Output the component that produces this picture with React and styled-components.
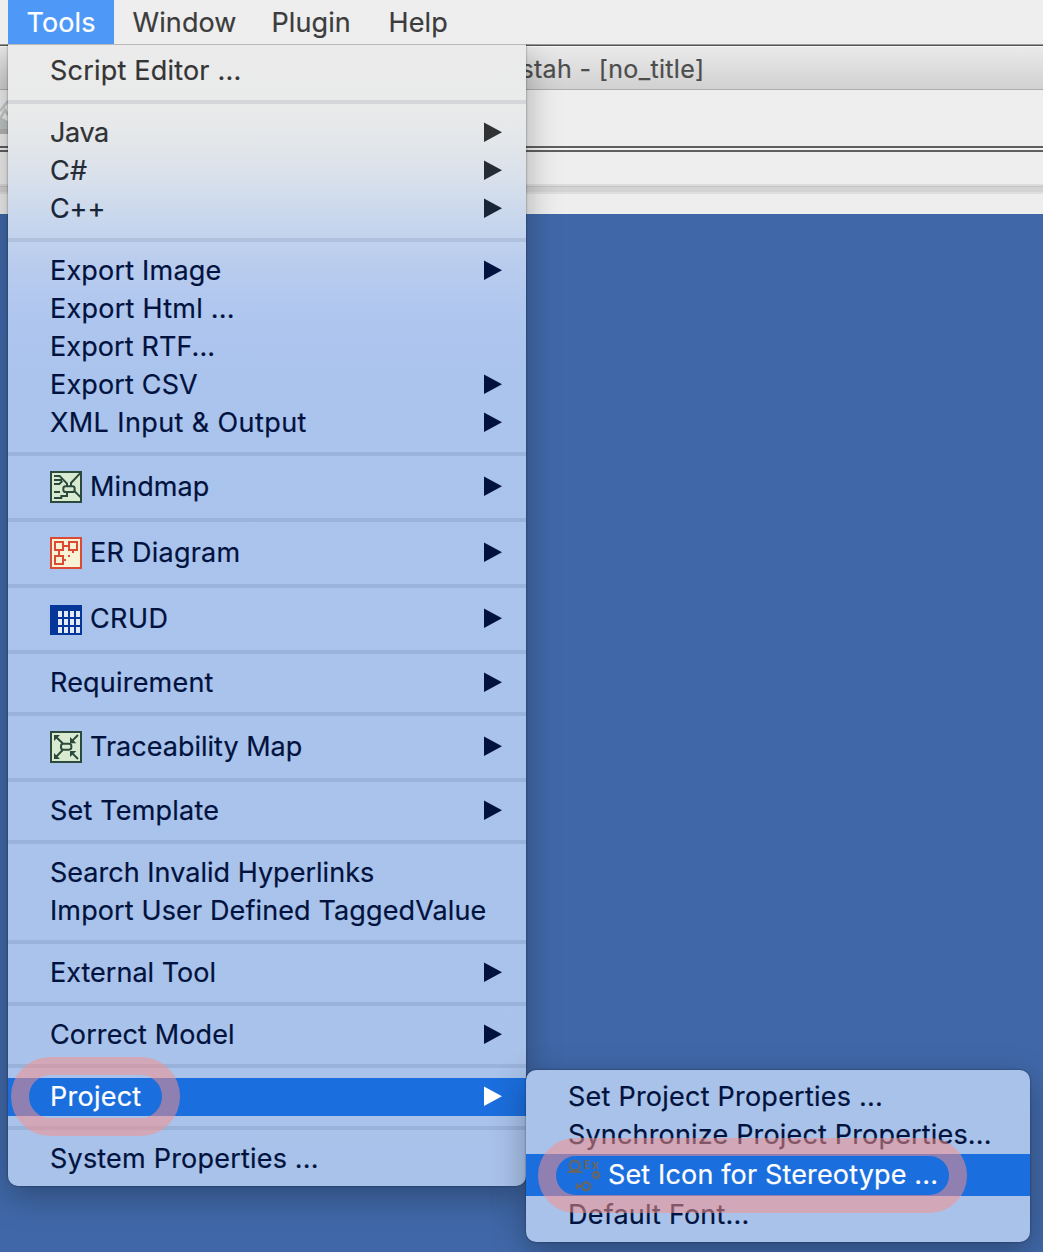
import { Fragment } from 'react'
import styled, { createGlobalStyle } from 'styled-components'

const barItems = [
	{ label: 'Tools', active: true, width: 106 },
	{ label: 'Window', width: 139 },
	{ label: 'Plugin', width: 117 },
	{ label: 'Help', width: 96 },
]

const toolsMenu = [
	[{ label: 'Script Editor ...', color: '#353535' }],
	[
		{ label: 'Java', arrow: true, color: '#303234', track: -0.4 },
		{ label: 'C#', arrow: true, color: '#262c36' },
		{ label: 'C++', arrow: true, color: '#182438', track: -0.1 },
	],
	[
		{ label: 'Export Image', arrow: true },
		{ label: 'Export Html ...', track: 0.25 },
		{ label: 'Export RTF...', track: 0.1 },
		{ label: 'Export CSV', arrow: true, track: 0.15 },
		{ label: 'XML Input & Output', arrow: true, track: 0.4 },
	],
	[{ label: 'Mindmap', icon: 'mindmap', arrow: true, track: 0.1 }],
	[{ label: 'ER Diagram', icon: 'er', arrow: true, track: 0.25 }],
	[{ label: 'CRUD', icon: 'crud', arrow: true, track: 0.4 }],
	[{ label: 'Requirement', arrow: true }],
	[{ label: 'Traceability Map', icon: 'trace', arrow: true, track: 0.01 }],
	[{ label: 'Set Template', arrow: true }],
	[
		{ label: 'Search Invalid Hyperlinks', track: 0.02 },
		{ label: 'Import User Defined TaggedValue', track: 0.12 },
	],
	[{ label: 'External Tool', arrow: true, track: 0.01 }],
	[{ label: 'Correct Model', arrow: true, track: 0.12 }],
	[{ label: 'Project', arrow: true, selected: true, track: 0.25 }],
	[{ label: 'System Properties ...' }],
]

const projectMenu = [
	{ label: 'Set Project Properties ...', track: 0.23 },
	{ label: 'Synchronize Project Properties...', track: 0.17 },
	{
		label: 'Set Icon for Stereotype ...',
		icon: 'stereotype',
		selected: true,
		track: 0.15,
	},
	{ label: 'Default Font...' },
]

const MindmapIcon = () => (
	<Icon viewBox='0 0 96 96'>
		<rect x='3' y='3' width='90' height='90' fill='#d8ead0' stroke='#2b4a3c' strokeWidth='6' />
		<g fill='none' stroke='#2b4a3c' strokeWidth='6'>
			<path d='M12 15H29L51 38V45M12 27H36M12 39H28L37 30' />
			<path d='M93 4L63 36V45M73 60L93 80' />
			<path d='M12 63H30M12 81H34V75H51V66' />
			<rect x='40' y='46' width='34' height='17' rx='7' />
		</g>
	</Icon>
)

const ErIcon = () => (
	<Icon viewBox='0 0 16 16'>
		<rect x='0.5' y='0.5' width='15' height='15' fill='#f8f3d6' stroke='#dc4a34' />
		<g fill='none' stroke='#dc4a34'>
			<path d='M2.5 2.5h4v4h-4zM9.5 2.5h4v4h-4zM2.5 9.5h4v4h-4zM7 4.5h2M4.5 7v2M7 11.5h1M9 9.5h1M11 7.5h1' />
		</g>
	</Icon>
)

const CrudIcon = () => (
	<Icon viewBox='0 0 16 16'>
		<rect y='1' width='16' height='15' fill='#05379b' />
		{[4, 8, 12].map((y) =>
			[4, 7, 10, 13].map((x) => (
				<rect key={`${x}-${y}`} x={x} y={y} width='2' height='3' fill='#e3ebfa' />
			))
		)}
	</Icon>
)

const TraceIcon = () => (
	<Icon viewBox='0 0 96 96'>
		<rect x='3' y='3' width='90' height='90' fill='#d8ead0' stroke='#2b4a3c' strokeWidth='6' />
		<g fill='none' stroke='#2b4a3c' strokeWidth='6'>
			<path d='M15 15L38 37M84 12L62 34M15 81L38 57M84 84L62 62' />
			<rect x='33' y='38' width='31' height='18' rx='7' />
		</g>
		<path
			d='M12 12H30L12 30zM60 18V37H79zM12 84V66L30 84zM60 78V60H79z'
			fill='#2b4a3c'
		/>
	</Icon>
)

const StereotypeIcon = () => (
	<Icon viewBox='0 0 32 32'>
		<g fill='none' stroke='#666666' strokeWidth='2.4'>
			<circle cx='6.7' cy='6.6' r='4.9' />
			<path d='M0 12.9H14M9 27.3H14M9.2 24.3V30.3' />
			<circle cx='28' cy='16' r='3' />
			<circle cx='18.3' cy='27.3' r='4' />
		</g>
		<IconText x='15.2' y='10.4'>E</IconText>
		<IconText x='23.8' y='10.4'>x</IconText>
	</Icon>
)

const icons = {
	mindmap: MindmapIcon,
	er: ErIcon,
	crud: CrudIcon,
	trace: TraceIcon,
	stereotype: StereotypeIcon,
}

const MenuItem = ({ label, icon, arrow, selected, color, track }) => {
	const ItemIcon = icons[icon]

	return (
		<Row $tall={!!icon} $selected={selected} $color={color}>
			{icon ? <ItemIcon /> : ''}
			<Label $track={track}>{label}</Label>
			{arrow ? (
				<Arrow viewBox='0 0 18 20'>
					<path d='M0 0.5L18 10.2L0 19.9z' fill='currentColor' />
				</Arrow>
			) : (
				''
			)}
		</Row>
	)
}

const App = () => {
	return (
		<Page>
			<GlobalStyle />
			<MenuBar>
				{barItems.map((item) => (
					<BarItem key={item.label} $active={item.active} $width={item.width}>
						{item.label}
					</BarItem>
				))}
			</MenuBar>
			<TitleBar>astah - [no_title]</TitleBar>
			<Toolbar>
				<ToolGlyph viewBox='0 0 8 38'>
					<path d='M0 14L8 4M0 22L5 13L8 18' stroke='#c4c8c7' strokeWidth='2.5' fill='none' />
					<path d='M0 20L8 24V32H0z' fill='#c0c6c4' />
					<path d='M0 32H8V37H0z' fill='#b5b5b5' />
				</ToolGlyph>
			</Toolbar>
			<DoubleRule />
			<TabStrip />
			<Divider />
			<TabStrip $short />
			<Desktop />

			<ToolsMenu>
				{toolsMenu.map((group, i) => (
					<Fragment key={i}>
						{i > 0 ? <Separator /> : ''}
						{group.map((item) => (
							<MenuItem key={item.label} {...item} />
						))}
					</Fragment>
				))}
				<ProjectRing />
			</ToolsMenu>
			<ProjectMenu>
				{projectMenu.map((item) => (
					<MenuItem key={item.label} {...item} />
				))}
				<StereotypeRing />
			</ProjectMenu>
		</Page>
	)
}

const GlobalStyle = createGlobalStyle`
	body {
		margin: 0;
		background: #4068a8;
	}

	* {
		box-sizing: border-box;
	}
`

const Page = styled.div`
	position: relative;
	display: flex;
	flex-direction: column;
	width: 1043px;
	height: 1252px;
	overflow: hidden;
	font-family: Inter, 'Liberation Sans', sans-serif;
	font-size: 27px;
	letter-spacing: 0.2px;
	white-space: pre;
	-webkit-text-stroke: 0.2px currentColor;
`

const MenuBar = styled.div`
	position: relative;
	z-index: 3;
	display: flex;
	height: 44px;
	flex: none;
	padding-left: 8px;
	background: #eeeeee;
`

const BarItem = styled.div`
	width: ${(props) => props.$width}px;
	height: 44px;
	padding-left: 18.5px;
	line-height: 46px;
	letter-spacing: 0.1px;
	color: ${(props) => (props.$active ? '#fff' : '#3c3c3c')};
	background: ${(props) => (props.$active ? '#4e98f8' : 'transparent')};
`

const TitleBar = styled.div`
	height: 46px;
	flex: none;
	padding-left: 506px;
	border-top: 1px solid #999;
	border-bottom: 1px solid #adadad;
	box-shadow: inset 0 1px 0 #555, inset 0 2px 0 #f8f8f8;
	background: linear-gradient(#ebebeb, #d1d1d1);
	font-size: 25px;
	letter-spacing: 0.35px;
	line-height: 48px;
	color: #4d4d4d;
`

const Toolbar = styled.div`
	height: 56px;
	flex: none;
	padding-top: 7px;
	background: #eeeeee;
`

const ToolGlyph = styled.svg`
	display: block;
	width: 8px;
	height: 38px;
`

const DoubleRule = styled.div`
	height: 6px;
	flex: none;
	border-top: 2px solid #5e5f5e;
	border-bottom: 2px solid #5e5f5e;
	background: #f2f2f2;
`

const TabStrip = styled.div`
	height: ${(props) => (props.$short ? 20 : 32)}px;
	flex: none;
	background: #eeeeee;
`

const Divider = styled.div`
	height: 10px;
	flex: none;
	border-top: 2px solid #dcdcdc;
	border-bottom: 2px solid #dedede;
	box-shadow: inset 0 1px 0 #c5c5c5;
	background: #d3d3d3;
`

const Desktop = styled.div`
	flex: 1;
	background: #4068a8;
`

const Menu = styled.div`
	position: absolute;
	padding: 8px 0;
	box-shadow: 0 0 2px rgba(0, 0, 0, 0.55), 0 10px 34px rgba(0, 0, 0, 0.3);
`

const ToolsMenu = styled(Menu)`
	z-index: 1;
	top: 44px;
	left: 8px;
	width: 518px;
	padding-top: 7px;
	border-top: 1px solid #b8b8b8;
	border-radius: 0 0 10px 10px;
	background: linear-gradient(
		#ebebeb 0,
		#e9eaea 65px,
		#e4e7ea 95px,
		#d8e0eb 135px,
		#c8d7ed 175px,
		#b9ccee 220px,
		#afc6ee 270px,
		#abc4ed 330px,
		#a9c2ea 100%
	);
`

const ProjectMenu = styled(Menu)`
	z-index: 2;
	top: 1070px;
	left: 526px;
	width: 504px;
	border-radius: 10px;
	background: #a9c2ea;
`

const Row = styled.div`
	display: flex;
	align-items: center;
	height: ${(props) => (props.$tall ? 42 : 38)}px;
	padding: 0 24px 0 42px;
	color: ${(props) => (props.$selected ? '#fff' : props.$color || '#00123d')};
	background: ${(props) => (props.$selected ? '#1b6edd' : 'transparent')};
`

const Label = styled.span`
	padding-bottom: 2px;
	letter-spacing: ${(props) => props.$track || 0.2}px;
`

const Arrow = styled.svg`
	width: 18px;
	height: 20px;
	margin: 0 0 2px auto;
`

const Icon = styled.svg`
	width: 32px;
	height: 32px;
	flex: none;
	margin-right: 8px;
	overflow: visible;
`

const IconText = styled.text`
	font: bold 12px 'Open Sans', sans-serif;
	letter-spacing: 0;
	fill: #666666;
	-webkit-text-stroke: 0;
`

const Separator = styled.div`
	height: 4px;
	margin: 10px 0;
	background: rgba(0, 25, 50, 0.09);
`

const Ring = styled.div`
	position: absolute;
	border: 18px solid rgba(246, 144, 139, 0.535);
	border-radius: 40px;
`

const ProjectRing = styled(Ring)`
	left: 3px;
	top: 1012px;
	width: 169px;
	height: 79px;
`

const StereotypeRing = styled(Ring)`
	left: 12px;
	top: 68px;
	width: 429px;
	height: 75px;
`

export default App
